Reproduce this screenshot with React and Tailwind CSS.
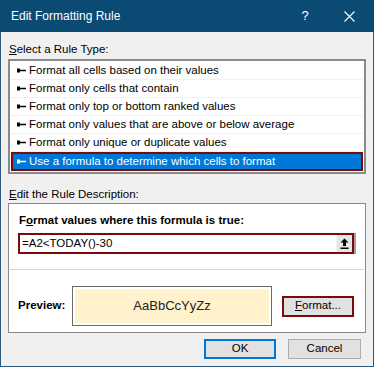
import React from 'react';

const RULES = [
  'Format all cells based on their values',
  'Format only cells that contain',
  'Format only top or bottom ranked values',
  'Format only values that are above or below average',
  'Format only unique or duplicate values',
  'Use a formula to determine which cells to format',
];

const font = { fontFamily: '"Liberation Sans", Arial, sans-serif' };

function Bullet({ color }) {
  return (
    <svg width="9" height="5" viewBox="0 0 9 5" className="flex-shrink-0">
      <rect x="0" y="0.5" width="3" height="4" fill={color} />
      <rect x="3" y="1.75" width="6" height="1.5" fill={color} />
    </svg>
  );
}

export default function App() {
  return (
    <div className="w-[375px] h-[368px] bg-white" style={font}>
      <div className="w-[374px] h-[367px] flex flex-col border border-t-0 border-[#2f5b7e] bg-[#f0f0f0] text-[11.5px] text-black">
        {/* Title bar */}
        <div className="h-[32px] -mx-px bg-[#0b4a72] flex items-center text-white flex-shrink-0">
          <span className="pl-[11px] text-[12px] flex-1">Edit Formatting Rule</span>
          <span className="text-[13px] w-[14px] mr-[32px] text-center">?</span>
          <svg width="11" height="11" viewBox="0 0 11 11" className="mr-[19px]">
            <path d="M0.5 0.5 L10.5 10.5 M10.5 0.5 L0.5 10.5" stroke="white" strokeWidth="1.1" />
          </svg>
        </div>

        <div className="flex flex-col px-[7px]">
          <p className="pt-[10px] h-[27px] pl-px leading-[14px]"><u>S</u>elect a Rule Type:</p>

          {/* Rule list */}
          <div className="border-2 border-[#8a8a8a] bg-white py-px px-px">
            {RULES.map((r, i) => {
              const sel = i === RULES.length - 1;
              return (
                <div key={r}
                  className={sel
                    ? 'h-[19px] flex items-center gap-[3px] pl-[4px] bg-[#0078d7] text-white border-2 border-[#7a0b0b]'
                    : 'h-[18px] flex items-center gap-[3px] pl-[6px] border-b border-[#f0f0f0]'}
                >
                  <Bullet color={sel ? '#ffffff' : '#000000'} />
                  <span>{r}</span>
                </div>
              );
            })}
          </div>

          <p className="pt-[13px] h-[29px] pl-px leading-[14px]"><u>E</u>dit the Rule Description:</p>

          {/* Description box */}
          <div className="border border-[#8a8a8a] bg-white h-[130px] flex flex-col">
            <div className="flex flex-col px-[8px] pt-[9px] h-[66px] border-b border-[#d6d6d6] mx-px">
              <p className="font-bold pl-px leading-[14px]">F<u>o</u>rmat values where this formula is true:</p>
              <div className="mt-[6px] flex">
                <div className="w-[338px] h-[21px] border-2 border-[#7a0b0b] flex items-center bg-white">
                  <span className="pl-[2px] flex-1 text-[11.5px]">=A2&lt;TODAY()-30</span>
                  <div className="w-[16px] h-full bg-[#e6e6e6] border-l border-[#f5f5f5] flex items-center justify-center">
                    <svg width="9" height="11" viewBox="0 0 9 11">
                      <path d="M4.5 0.5 L8.5 4.5 L6 4.5 L6 8 L3 8 L3 4.5 L0.5 4.5 Z" fill="#000" />
                      <rect x="0.5" y="9.5" width="8" height="1.5" fill="#000" />
                    </svg>
                  </div>
                </div>
                <div className="w-[2px] h-[21px] bg-[#a0a0a0]" />
              </div>
            </div>

            <div className="flex items-center pl-[9px] pt-[16px]">
              <span className="font-bold w-[54px]">Preview:</span>
              <div className="w-[200px] h-[40px] border border-[#6a6a6a] p-[2px]">
                <div className="w-full h-full bg-[#fff2cc] flex items-center justify-center text-[13px] text-[#222]">
                  AaBbCcYyZz
                </div>
              </div>
              <button className="ml-[10px] w-[72px] h-[21px] border-2 border-[#7a0b0b] bg-[#e1e1e1] flex items-center justify-center text-[11.5px] leading-none">
                <span><u>F</u>ormat...</span>
              </button>
            </div>
          </div>

          {/* Footer buttons */}
          <div className="flex justify-end gap-[12px] pt-[6px] pr-[5px]">
            <button className="w-[72px] h-[20px] border-2 border-[#0078d7] bg-[#e1e1e1] text-[11.5px] leading-none">OK</button>
            <button className="w-[73px] h-[20px] border border-[#adadad] bg-[#e1e1e1] text-[11.5px] leading-none">Cancel</button>
          </div>
        </div>
      </div>
    </div>
  );
}
